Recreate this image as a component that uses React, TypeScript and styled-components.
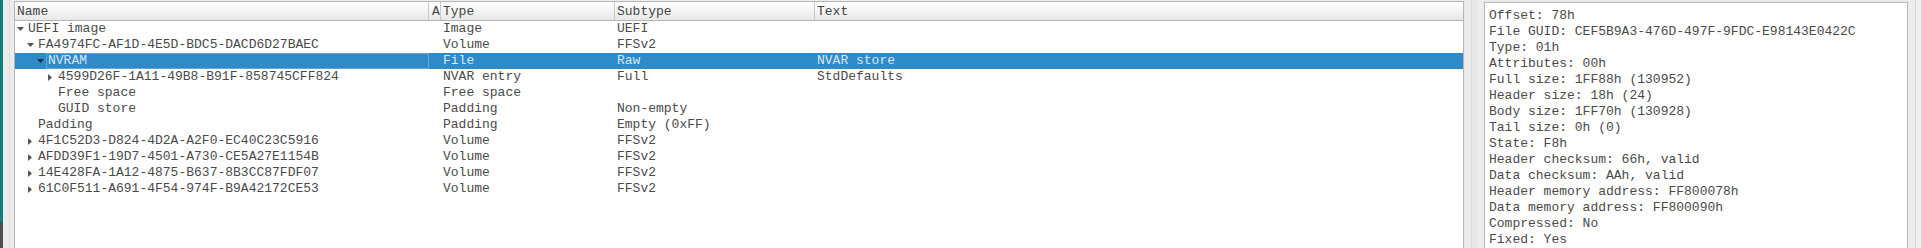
import React from 'react';
import styled, { createGlobalStyle } from 'styled-components';

const GlobalStyle = createGlobalStyle`
  html, body {
    margin: 0;
    padding: 0;
    background: #ececec;
    overflow: hidden;
  }
  body {
    font-family: "Liberation Mono", "Courier New", monospace;
    font-size: 13px;
  }
`

const Window = styled.div`
  display: flex;
  height: 248px;
  width: 1921px;
  overflow: hidden;
  background: #ececec;
`

const LeftEdge = styled.div`
  width: 14px;
  flex: none;
  display: flex;
`

const Accent = styled.div`
  width: 3px;
  background: linear-gradient(to bottom, #127f7c 0, #127f7c 222px, #4d4d4d 222px);
`

const EdgeGroove = styled.div`
  width: 6px;
  border-right: 1px solid #dcdcdc;
`

const TreePanel = styled.div`
  flex: 1;
  margin-top: 1px;
  border: 1px solid #b6b6b6;
  border-bottom: none;
  background: #ffffff;
  overflow: hidden;
`

const Grid = styled.div`
  display: grid;
  grid-template-columns: 414px 12px 174px 200px 1fr;
`

const HeaderRow = styled(Grid)`
  height: 18px;
  border-bottom: 1px solid #b3b3b3;
  background: linear-gradient(to bottom, #ffffff 0%, #f4f4f4 50%, #e7e7e7 100%);
  color: #454545;
`

const HeaderCell = styled.div<{ $last?: boolean; $center?: boolean }>`
  box-sizing: border-box;
  padding-left: ${(p) => (p.$center ? '3px' : '2px')};
  padding-top: 1px;
  line-height: 17px;
  border-right: ${(p) => (p.$last ? 'none' : '1px solid #c9c9c9')};
  white-space: nowrap;
  overflow: hidden;
`

const Row = styled(Grid)<{ $selected?: boolean }>`
  height: 16px;
  line-height: 16px;
  background: ${(p) => (p.$selected ? '#2f8ac8' : 'transparent')};
  color: ${(p) => (p.$selected ? '#d6e7f5' : '#4a4a4a')};
`

const Cell = styled.div`
  padding-left: 2px;
  white-space: nowrap;
  overflow: hidden;
`

const NameCell = styled.div<{ $level: number }>`
  display: flex;
  align-items: stretch;
  padding-left: ${(p) => 2 + (p.$level - 1) * 10}px;
  white-space: nowrap;
  overflow: hidden;
`

const ArrowBox = styled.span`
  width: 9px;
  flex: none;
  display: flex;
  align-items: center;
`

const Label = styled.span<{ $focused?: boolean }>`
  flex: 1;
  box-sizing: border-box;
  padding-left: ${(p) => (p.$focused ? '1px' : '2px')};
  border: ${(p) => (p.$focused ? '1px solid #62a7d8' : 'none')};
  line-height: ${(p) => (p.$focused ? '14px' : '16px')};
`

const Splitter = styled.div`
  width: 20px;
  flex: none;
  display: flex;
  padding-left: 7px;
  box-sizing: border-box;
`

const Handle = styled.div`
  width: 5px;
  border-left: 1px solid #dadada;
  background: #e6e6e6;
`

const InfoPanel = styled.div`
  width: 424px;
  flex: none;
  box-sizing: border-box;
  margin-top: 2px;
  border: 1px solid #b6b6b6;
  border-bottom: none;
  background: #ffffff;
  padding: 5px 0 0 4px;
  color: #4a4a4a;
  line-height: 16px;
  white-space: pre;
  overflow: hidden;
`

const RightEdge = styled.div`
  width: 13px;
  flex: none;
  box-sizing: border-box;
  padding-left: 7px;
  display: flex;
`

const RightLine = styled.div`
  flex: 1;
  border-left: 1px solid #d6d6d6;
  background: #f0f0f0;
`

type Expand = 'open' | 'closed' | 'none'

interface Item {
  name: string
  level: number
  expand: Expand
  type: string
  subtype: string
  text: string
  selected?: boolean
}

const items: Item[] = [
  { name: 'UEFI image', level: 1, expand: 'open', type: 'Image', subtype: 'UEFI', text: '' },
  { name: 'FA4974FC-AF1D-4E5D-BDC5-DACD6D27BAEC', level: 2, expand: 'open', type: 'Volume', subtype: 'FFSv2', text: '' },
  { name: 'NVRAM', level: 3, expand: 'open', type: 'File', subtype: 'Raw', text: 'NVAR store', selected: true },
  { name: '4599D26F-1A11-49B8-B91F-858745CFF824', level: 4, expand: 'closed', type: 'NVAR entry', subtype: 'Full', text: 'StdDefaults' },
  { name: 'Free space', level: 4, expand: 'none', type: 'Free space', subtype: '', text: '' },
  { name: 'GUID store', level: 4, expand: 'none', type: 'Padding', subtype: 'Non-empty', text: '' },
  { name: 'Padding', level: 2, expand: 'none', type: 'Padding', subtype: 'Empty (0xFF)', text: '' },
  { name: '4F1C52D3-D824-4D2A-A2F0-EC40C23C5916', level: 2, expand: 'closed', type: 'Volume', subtype: 'FFSv2', text: '' },
  { name: 'AFDD39F1-19D7-4501-A730-CE5A27E1154B', level: 2, expand: 'closed', type: 'Volume', subtype: 'FFSv2', text: '' },
  { name: '14E428FA-1A12-4875-B637-8B3CC87FDF07', level: 2, expand: 'closed', type: 'Volume', subtype: 'FFSv2', text: '' },
  { name: '61C0F511-A691-4F54-974F-B9A42172CE53', level: 2, expand: 'closed', type: 'Volume', subtype: 'FFSv2', text: '' },
]

const info = [
  'Offset: 78h',
  'File GUID: CEF5B9A3-476D-497F-9FDC-E98143E0422C',
  'Type: 01h',
  'Attributes: 00h',
  'Full size: 1FF88h (130952)',
  'Header size: 18h (24)',
  'Body size: 1FF70h (130928)',
  'Tail size: 0h (0)',
  'State: F8h',
  'Header checksum: 66h, valid',
  'Data checksum: AAh, valid',
  'Header memory address: FF800078h',
  'Data memory address: FF800090h',
  'Compressed: No',
  'Fixed: Yes',
]

const Arrow = ({ kind, light }: { kind: Expand; light?: boolean }) => {
  const fill = light ? '#1b2f44' : '#555555'
  if (kind === 'open') {
    return (
      <svg width="7" height="4" viewBox="0 0 7 4">
        <polygon points="0,0 7,0 3.5,4" fill={fill} />
      </svg>
    )
  }
  if (kind === 'closed') {
    return (
      <svg width="4" height="7" viewBox="0 0 4 7" style={{ marginLeft: 1 }}>
        <polygon points="0,0 4,3.5 0,7" fill={fill} />
      </svg>
    )
  }
  return null
}

export default function App() {
  return (
    <>
      <GlobalStyle />
      <Window>
        <LeftEdge>
          <Accent />
          <EdgeGroove />
        </LeftEdge>
        <TreePanel>
          <HeaderRow>
            <HeaderCell>Name</HeaderCell>
            <HeaderCell $center>A</HeaderCell>
            <HeaderCell>Type</HeaderCell>
            <HeaderCell>Subtype</HeaderCell>
            <HeaderCell $last>Text</HeaderCell>
          </HeaderRow>
          {items.map((item) => (
            <Row key={item.name + item.level} $selected={item.selected}>
              <NameCell $level={item.level}>
                <ArrowBox>
                  <Arrow kind={item.expand} light={item.selected} />
                </ArrowBox>
                <Label $focused={item.selected}>{item.name}</Label>
              </NameCell>
              <Cell />
              <Cell>{item.type}</Cell>
              <Cell>{item.subtype}</Cell>
              <Cell>{item.text}</Cell>
            </Row>
          ))}
        </TreePanel>
        <Splitter>
          <Handle />
        </Splitter>
        <InfoPanel>
          {info.map((line) => (
            <div key={line}>{line}</div>
          ))}
        </InfoPanel>
        <RightEdge>
          <RightLine />
        </RightEdge>
      </Window>
    </>
  )
}
